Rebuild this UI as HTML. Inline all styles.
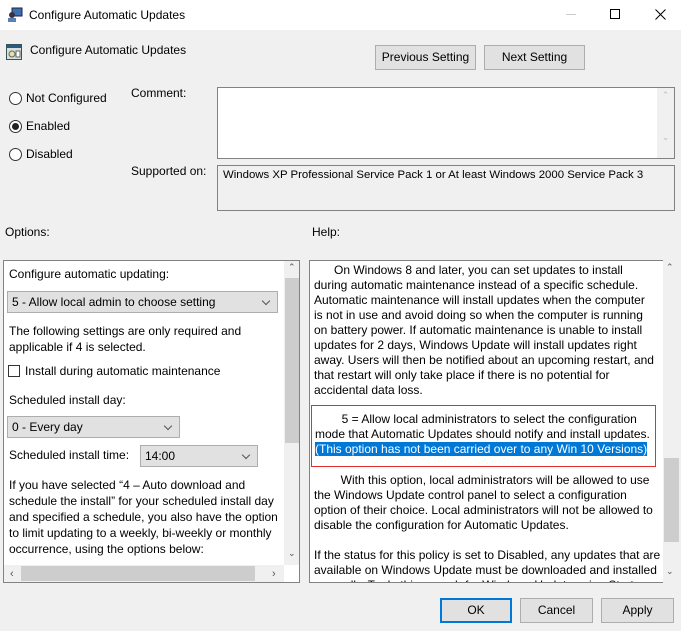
<!DOCTYPE html><html><head><meta charset="utf-8"><style>
*{margin:0;padding:0;box-sizing:border-box}
body{width:681px;height:631px;background:#f0f0f0;font-family:"Liberation Sans",sans-serif;font-size:12px;color:#000;position:relative;overflow:hidden}
.a{position:absolute;white-space:nowrap}
.btn{position:absolute;background:#e1e1e1;border:1px solid #adadad;text-align:center;line-height:23px}
.radio{position:absolute;width:13px;height:13px;border:1px solid #333;border-radius:50%;background:#fff}
.sel{position:absolute;background:#e1e1e1;border:1px solid #adadad;line-height:20px;padding-left:4px}
.sel:after{content:"";position:absolute;right:8px;top:6px;width:5px;height:5px;border-right:1px solid #555;border-bottom:1px solid #555;transform:rotate(45deg)}
</style></head><body>
<div class="a" style="left:0;top:0;width:681px;height:30px;background:#fff"></div>
<svg class="a" style="left:7px;top:7px" width="16" height="16"><rect x="5" y="1" width="10" height="8" fill="#3a6fb0" stroke="#224"/><circle cx="5" cy="8" r="3" fill="#334"/><rect x="1" y="11" width="8" height="4" fill="#5a7fb0"/></svg>
<div class="a" style="left:29px;top:8px;font-size:12px">Configure Automatic Updates</div>
<div class="a" style="left:566px;top:14px;width:10px;height:1px;background:#ccc"></div>
<div class="a" style="left:610px;top:9px;width:10px;height:10px;border:1px solid #000"></div>
<svg class="a" style="left:655px;top:9px" width="11" height="11"><path d="M0.5 0.5L10.5 10.5M10.5 0.5L0.5 10.5" stroke="#000" stroke-width="1"/></svg>
<svg class="a" style="left:6px;top:44px" width="16" height="16"><rect x="0.5" y="0.5" width="15" height="15" fill="#d8e0e0" stroke="#355"/><rect x="1" y="1" width="14" height="3" fill="#2a5a8a"/><circle cx="6" cy="10" r="3" fill="#e8e0a0" stroke="#666"/><rect x="10" y="7" width="4" height="6" fill="#fff" stroke="#666"/></svg>
<div class="a" style="left:30px;top:43px">Configure Automatic Updates</div>
<div class="btn" style="left:375px;top:45px;width:101px;height:25px">Previous Setting</div>
<div class="btn" style="left:484px;top:45px;width:101px;height:25px">Next Setting</div>
<div class="radio" style="left:9px;top:92px"></div><div class="a" style="left:26px;top:91px">Not Configured</div>
<div class="radio" style="left:9px;top:120px"></div><div class="a" style="left:12px;top:123px;width:7px;height:7px;border-radius:50%;background:#222"></div><div class="a" style="left:26px;top:119px">Enabled</div>
<div class="radio" style="left:9px;top:148px"></div><div class="a" style="left:26px;top:147px">Disabled</div>
<div class="a" style="left:131px;top:86px">Comment:</div>
<div class="a" style="left:131px;top:164px">Supported on:</div>
<div class="a" style="left:217px;top:87px;width:458px;height:72px;background:#fff;border:1px solid #828282"></div>
<div class="a" style="left:657px;top:88px;width:17px;height:70px;background:#f0f0f0;color:#bbb;font-size:9px;text-align:center;line-height:14px">⌃<br><br><br>⌄</div>
<div class="a" style="left:217px;top:165px;width:458px;height:46px;border:1px solid #828282"></div>
<div class="a" style="left:223px;top:169px;font-size:11.4px">Windows XP Professional Service Pack 1 or At least Windows 2000 Service Pack 3</div>
<div class="a" style="left:5px;top:225px">Options:</div>
<div class="a" style="left:312px;top:225px">Help:</div>
<div class="a" style="left:3px;top:260px;width:297px;height:323px;background:#fff;border:1px solid #828282"></div>
<div class="a" style="left:284px;top:261px;width:15px;height:304px;background:#f0f0f0"></div>
<div class="a" style="left:285px;top:278px;width:14px;height:165px;background:#cdcdcd"></div>
<div class="a" style="left:4px;top:565px;width:280px;height:17px;background:#f0f0f0"></div>
<div class="a" style="left:21px;top:566px;width:234px;height:15px;background:#cdcdcd"></div>
<div class="a" style="left:288px;top:262px;font-size:9px;color:#555">⌃</div>
<div class="a" style="left:288px;top:548px;font-size:9px;color:#555">⌄</div>
<div class="a" style="left:10px;top:568px;font-size:11px;color:#555">‹</div>
<div class="a" style="left:272px;top:568px;font-size:11px;color:#555">›</div>
<div class="a" style="left:9px;top:267px">Configure automatic updating:</div>
<div class="sel" style="left:7px;top:291px;width:271px;height:22px">5 - Allow local admin to choose setting</div>
<div class="a" style="left:9px;top:323px;line-height:16px">The following settings are only required and<br>applicable if 4 is selected.</div>
<div class="a" style="left:8px;top:365px;width:12px;height:12px;border:1px solid #333;background:#fff"></div>
<div class="a" style="left:25px;top:364px">Install during automatic maintenance</div>
<div class="a" style="left:9px;top:393px">Scheduled install day:</div>
<div class="sel" style="left:7px;top:416px;width:173px;height:22px">0 - Every day</div>
<div class="a" style="left:9px;top:448px">Scheduled install time:</div>
<div class="sel" style="left:140px;top:445px;width:118px;height:22px">14:00</div>
<div class="a" style="left:9px;top:477px;line-height:16px">If you have selected “4 – Auto download and<br>schedule the install” for your scheduled install day<br>and specified a schedule, you also have the option<br>to limit updating to a weekly, bi-weekly or monthly<br>occurrence, using the options below:</div>
<div class="a" style="left:309px;top:260px;width:354px;height:323px;background:#fff;border:1px solid #828282;border-right:none"></div>
<div class="a" style="left:663px;top:260px;width:18px;height:323px;background:#f0f0f0"></div>
<div class="a" style="left:664px;top:458px;width:15px;height:84px;background:#cdcdcd"></div>
<div class="a" style="left:666px;top:262px;font-size:9px;color:#555">⌃</div>
<div class="a" style="left:666px;top:566px;font-size:9px;color:#555">⌄</div>
<div class="a" style="left:314px;top:263px;line-height:15px">&nbsp; &nbsp; &nbsp; On Windows 8 and later, you can set updates to install<br>during automatic maintenance instead of a specific schedule.<br>Automatic maintenance will install updates when the computer<br>is not in use and avoid doing so when the computer is running<br>on battery power. If automatic maintenance is unable to install<br>updates for 2 days, Windows Update will install updates right<br>away. Users will then be notified about an upcoming restart, and<br>that restart will only take place if there is no potential for<br>accidental data loss.</div>
<div class="a" style="left:311px;top:405px;width:345px;height:62px;border:1px solid #e03030"></div>
<div class="a" style="left:315px;top:412px;line-height:15px">&nbsp; &nbsp; &nbsp; &nbsp; 5 = Allow local administrators to select the configuration<br>mode that Automatic Updates should notify and install updates.<br><span style="background:#0078d7;color:#fff">(This option has not been carried over to any Win 10 Versions)</span></div>
<div class="a" style="left:314px;top:473px;line-height:15px">&nbsp; &nbsp; &nbsp; &nbsp; With this option, local administrators will be allowed to use<br>the Windows Update control panel to select a configuration<br>option of their choice. Local administrators will not be allowed to<br>disable the configuration for Automatic Updates.</div>
<div class="a" style="left:314px;top:548px;line-height:15px;height:34px;overflow:hidden">If the status for this policy is set to Disabled, any updates that are<br>available on Windows Update must be downloaded and installed<br>manually. To do this, search for Windows Update using Start.</div>
<div class="btn" style="left:440px;top:598px;width:72px;height:25px;border:2px solid #0078d7;line-height:21px">OK</div>
<div class="btn" style="left:520px;top:598px;width:73px;height:25px">Cancel</div>
<div class="btn" style="left:601px;top:598px;width:73px;height:25px">Apply</div>
</body></html>
